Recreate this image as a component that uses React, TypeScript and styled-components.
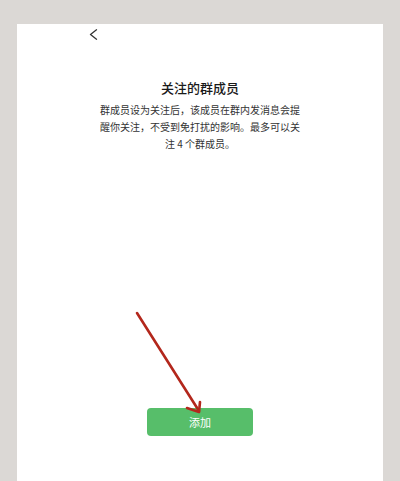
import React from "react";
import styled, { createGlobalStyle } from "styled-components";

const GlobalStyle = createGlobalStyle`
  html, body {
    margin: 0;
    padding: 0;
    background: #dbd8d5;
  }
  body {
    font-family: "Noto Sans CJK SC", "Noto Sans", sans-serif;
  }
`;

export default function App() {
  return (
    <>
      <GlobalStyle />
      <Page>
        <Screen>
          <TopBar>
            <BackButton aria-label="返回">
              <svg width="9" height="11" viewBox="0 0 9 11">
                <polyline
                  points="7.5,0.8 1.5,5.5 7.5,10.2"
                  fill="none"
                  stroke="#333"
                  strokeWidth="1.3"
                  strokeLinecap="round"
                  strokeLinejoin="round"
                />
              </svg>
            </BackButton>
          </TopBar>
          <Title>关注的群成员</Title>
          <Description>
            群成员设为关注后，该成员在群内发消息会提醒你关注，不受到免打扰的影响。最多可以关注 4 个群成员。
          </Description>
          <Spacer />
          <AddButton>添加</AddButton>
        </Screen>
        <Annotation width="400" height="481" viewBox="0 0 400 481">
          <line
            x1="137"
            y1="313"
            x2="199"
            y2="411"
            stroke="#b3271c"
            strokeWidth="2.6"
            strokeLinecap="round"
          />
          <polyline
            points="187,408 199,412 200,402"
            fill="none"
            stroke="#b3271c"
            strokeWidth="2.6"
            strokeLinecap="round"
            strokeLinejoin="round"
          />
        </Annotation>
      </Page>
    </>
  );
}

const Page = styled.div`
  position: relative;
  width: 400px;
  height: 481px;
  padding-top: 24px;
  box-sizing: border-box;
  overflow: hidden;
`;

const Screen = styled.div`
  margin: 0 17px;
  height: 457px;
  background: #ffffff;
  display: flex;
  flex-direction: column;
  align-items: center;
`;

const TopBar = styled.div`
  align-self: stretch;
  height: 14px;
  padding: 5px 0 0 72px;
`;

const BackButton = styled.div`
  width: 9px;
  height: 11px;
  display: flex;
`;

const Title = styled.div`
  margin-top: 37px;
  font-size: 13px;
  line-height: 16px;
  font-weight: 500;
  color: #1a1a1a;
`;

const Description = styled.p`
  margin: 5px 0 0;
  width: 202px;
  font-size: 10px;
  line-height: 17px;
  color: #333333;
  text-align: center;
`;

const Spacer = styled.div`
  flex: 1;
`;

const AddButton = styled.button`
  width: 106px;
  height: 28px;
  margin-bottom: 45px;
  border: none;
  border-radius: 4px;
  background: #57be6a;
  color: #ffffff;
  font-family: "Noto Sans CJK SC", sans-serif;
  font-size: 11px;
  padding: 0;
`;

const Annotation = styled.svg`
  position: absolute;
  left: 0;
  top: 0;
  pointer-events: none;
`;
